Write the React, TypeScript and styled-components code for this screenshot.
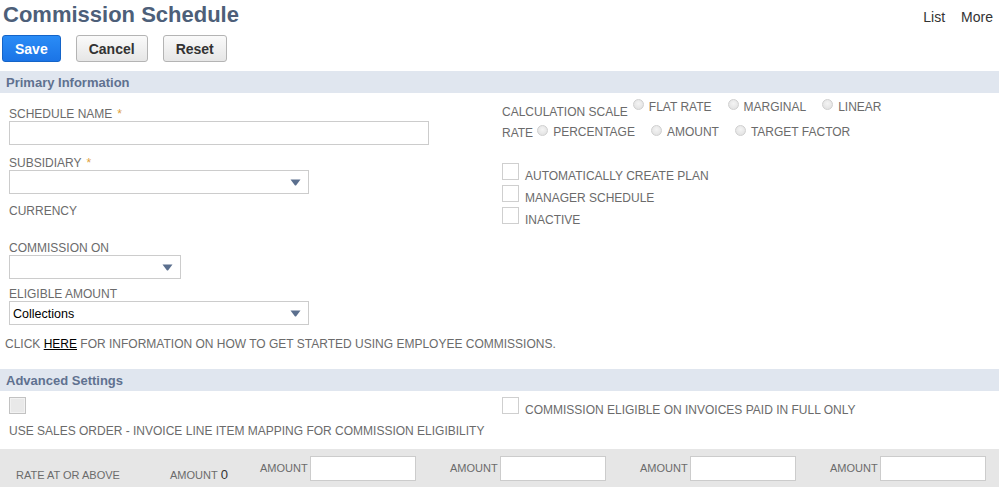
import React from 'react';
import styled, { createGlobalStyle } from 'styled-components';

const GlobalStyle = createGlobalStyle`
  html, body {
    margin: 0;
    padding: 0;
    background: #fff;
  }
  body {
    font-family: "Liberation Sans", Arial, Helvetica, sans-serif;
    color: #333;
  }
  * {
    box-sizing: border-box;
  }
`;

const Page = styled.div`
  width: 999px;
  height: 491px;
  overflow: hidden;
`;

const TopBar = styled.div`
  display: flex;
  justify-content: space-between;
  align-items: flex-start;
  height: 35px;
`;

const Title = styled.h1`
  margin: 0;
  padding: 2px 0 0 3px;
  font-size: 22px;
  line-height: 25px;
  font-weight: bold;
  color: #4d5f79;
`;

const Links = styled.div`
  display: flex;
  gap: 16px;
  padding: 9px 6px 0 0;
`;

const NavLink = styled.a`
  font-size: 14px;
  line-height: 16px;
  color: #333;
  text-decoration: none;
  cursor: pointer;
`;

const ButtonBar = styled.div`
  display: flex;
  gap: 15px;
  padding-left: 2px;
`;

const Button = styled.button<{ $primary?: boolean }>`
  height: 27px;
  padding: 0 12px;
  border-radius: 3px;
  font: bold 14px "Liberation Sans", Arial, sans-serif;
  border: 1px solid ${p => (p.$primary ? '#1464c8' : '#b4b4b4')};
  background: ${p => (p.$primary ? 'linear-gradient(#2a8cf6, #1b74e6)' : 'linear-gradient(#fafafa, #e6e6e6)')};
  color: ${p => (p.$primary ? '#fff' : '#333')};
  cursor: pointer;
`;

const SectionHeader = styled.div<{ $top: number }>`
  margin-top: ${p => p.$top}px;
  height: 22px;
  padding: 2px 0 0 6px;
  line-height: 20px;
  background: #e0e6ef;
  color: #5f7190;
  font-size: 13px;
  font-weight: bold;
`;

const Columns = styled.div`
  display: grid;
  grid-template-columns: 502px 1fr;
`;

const LeftCol = styled.div<{ $top: number }>`
  padding: ${p => p.$top}px 0 0 9px;
`;

const RightCol = styled.div`
  display: flex;
  flex-direction: column;
`;

const Field = styled.div<{ $after?: number }>`
  margin-bottom: ${p => p.$after ?? 0}px;
`;

const Label = styled.div`
  padding-top: 1px;
  font-size: 12px;
  line-height: 14px;
  color: #6b6b6b;
  text-transform: uppercase;
`;

const Star = styled.span`
  color: #e0a03c;
  margin-left: 5px;
`;

const TextBox = styled.input<{ $w: number }>`
  display: block;
  width: ${p => p.$w}px;
  height: 24px;
  border: 1px solid #cccccc;
  background: #fff;
  padding: 0 4px;
  outline: none;
`;

const SelectBox = styled.div<{ $w: number }>`
  display: flex;
  align-items: center;
  justify-content: space-between;
  width: ${p => p.$w}px;
  height: 24px;
  border: 1px solid #cccccc;
  background: #fff;
  padding: 1px 7px 0 3px;
`;

const SelectValue = styled.span`
  font-size: 12.5px;
  color: #000;
`;

const Spacer = styled.div<{ $h: number }>`
  height: ${p => p.$h}px;
`;

const RadioRow = styled.div<{ $top?: number }>`
  display: flex;
  align-items: flex-start;
  height: 25px;
  margin-top: ${p => p.$top ?? 0}px;
`;

const RowLabel = styled.span<{ $drop: number; $gap: number }>`
  font-size: 12px;
  line-height: 15px;
  color: #6b6b6b;
  margin-top: ${p => p.$drop}px;
  margin-right: ${p => p.$gap}px;
`;

const RadioOption = styled.label`
  display: flex;
  align-items: flex-start;
  margin-right: 16px;
`;

const RadioDot = styled.span<{ $drop: number }>`
  width: 11px;
  height: 11px;
  border-radius: 50%;
  border: 1px solid #d0d0d0;
  background: radial-gradient(circle at 50% 40%, #f4f4f4, #dedede);
  margin-top: ${p => p.$drop}px;
  margin-right: 5px;
  flex: none;
`;

const OptionText = styled.span<{ $drop: number }>`
  font-size: 12px;
  line-height: 15px;
  color: #6b6b6b;
  margin-top: ${p => p.$drop}px;
`;

const CheckList = styled.div<{ $top: number }>`
  display: flex;
  flex-direction: column;
  gap: 5px;
  margin-top: ${p => p.$top}px;
`;

const CheckRow = styled.label`
  display: flex;
  align-items: flex-start;
  height: 17px;
`;

const CheckBox = styled.span<{ $disabled?: boolean }>`
  width: 17px;
  height: 17px;
  flex: none;
  border: 1px solid ${p => (p.$disabled ? '#c2c2c2' : '#cfcfcf')};
  background: ${p => (p.$disabled ? '#e9e9e9' : '#fff')};
  box-shadow: ${p => (p.$disabled ? 'inset 0 0 0 1px #f2f2f2' : 'none')};
`;

const CheckText = styled.span`
  margin: 6px 0 0 6px;
  font-size: 12px;
  line-height: 15px;
  color: #6b6b6b;
  white-space: nowrap;
`;

const HelpText = styled.div`
  margin-top: 12px;
  padding-left: 5px;
  font-size: 12px;
  line-height: 15px;
  color: #6b6b6b;
`;

const HelpLink = styled.a`
  color: #000;
  text-decoration: underline;
  cursor: pointer;
`;

const AdvLeft = styled.div`
  padding: 6px 0 0 9px;
  display: flex;
  flex-direction: column;
  align-items: flex-start;
  gap: 10px;
`;

const AdvText = styled.span`
  font-size: 12px;
  line-height: 15px;
  color: #6b6b6b;
  white-space: nowrap;
`;

const RateBand = styled.div`
  margin-top: 10px;
  height: 38px;
  background: #e6e6e6;
  display: grid;
  grid-template-columns: 154px 90px repeat(4, 190px);
  padding-left: 16px;
  align-items: center;
`;

const BandText = styled.span`
  align-self: end;
  margin-bottom: 5px;
  font-size: 11px;
  line-height: 13px;
  color: #6b6b6b;
  white-space: nowrap;
`;

const BandValue = styled.span`
  font-size: 13px;
  color: #333;
  margin-left: 3px;
`;

const AmountCell = styled.div`
  display: flex;
  align-items: center;
  gap: 2px;
`;

const AmountLabel = styled.span`
  font-size: 11px;
  line-height: 13px;
  color: #6b6b6b;
  margin-top: 1px;
`;

const AmountBox = styled.input`
  width: 106px;
  height: 25px;
  border: 1px solid #cccccc;
  background: #fff;
  outline: none;
`;

const Arrow: React.FC = () => (
  <svg width="11" height="7" viewBox="0 0 11 7">
    <path d="M0.5 0.5 H10.5 L6.2 6.2 Q5.5 6.9 4.8 6.2 Z" fill="#5b6f8e" />
  </svg>
);

const Select: React.FC<{ width: number; value?: string }> = ({ width, value }) => (
  <SelectBox $w={width}>
    <SelectValue>{value}</SelectValue>
    <Arrow />
  </SelectBox>
);

const Radio: React.FC<{ text: string; dot: number; drop: number }> = ({ text, dot, drop }) => (
  <RadioOption>
    <RadioDot $drop={dot} />
    <OptionText $drop={drop}>{text}</OptionText>
  </RadioOption>
);

const Check: React.FC<{ text: string }> = ({ text }) => (
  <CheckRow>
    <CheckBox />
    <CheckText>{text}</CheckText>
  </CheckRow>
);

export default function App() {
  return (
    <Page>
      <GlobalStyle />
      <TopBar>
        <Title>Commission Schedule</Title>
        <Links>
          <NavLink>List</NavLink>
          <NavLink>More</NavLink>
        </Links>
      </TopBar>

      <ButtonBar>
        <Button $primary>Save</Button>
        <Button>Cancel</Button>
        <Button>Reset</Button>
      </ButtonBar>

      <SectionHeader $top={9}>Primary Information</SectionHeader>
      <Columns>
        <LeftCol $top={13}>
          <Field $after={10}>
            <Label>
              Schedule Name<Star>*</Star>
            </Label>
            <TextBox $w={420} />
          </Field>
          <Field $after={9}>
            <Label>
              Subsidiary<Star>*</Star>
            </Label>
            <Select width={300} />
          </Field>
          <Field $after={8}>
            <Label>Currency</Label>
            <Spacer $h={14} />
          </Field>
          <Field $after={7}>
            <Label>Commission On</Label>
            <Select width={172} />
          </Field>
          <Field>
            <Label>Eligible Amount</Label>
            <Select width={300} value="Collections" />
          </Field>
        </LeftCol>

        <RightCol>
          <RadioRow $top={6}>
            <RowLabel $drop={6} $gap={5}>CALCULATION SCALE</RowLabel>
            <Radio text="FLAT RATE" dot={0} drop={1} />
            <Radio text="MARGINAL" dot={0} drop={1} />
            <Radio text="LINEAR" dot={0} drop={1} />
          </RadioRow>
          <RadioRow>
            <RowLabel $drop={2} $gap={4}>RATE</RowLabel>
            <Radio text="PERCENTAGE" dot={1} drop={1} />
            <Radio text="AMOUNT" dot={1} drop={1} />
            <Radio text="TARGET FACTOR" dot={1} drop={1} />
          </RadioRow>
          <CheckList $top={14}>
            <Check text="AUTOMATICALLY CREATE PLAN" />
            <Check text="MANAGER SCHEDULE" />
            <Check text="INACTIVE" />
          </CheckList>
        </RightCol>
      </Columns>

      <HelpText>
        CLICK <HelpLink>HERE</HelpLink> FOR INFORMATION ON HOW TO GET STARTED USING EMPLOYEE COMMISSIONS.
      </HelpText>

      <SectionHeader $top={17}>Advanced Settings</SectionHeader>
      <Columns>
        <AdvLeft>
          <CheckBox $disabled />
          <AdvText>USE SALES ORDER - INVOICE LINE ITEM MAPPING FOR COMMISSION ELIGIBILITY</AdvText>
        </AdvLeft>
        <RightCol>
          <CheckList $top={6}>
            <Check text="COMMISSION ELIGIBLE ON INVOICES PAID IN FULL ONLY" />
          </CheckList>
        </RightCol>
      </Columns>

      <RateBand>
        <BandText>RATE AT OR ABOVE</BandText>
        <BandText>
          AMOUNT<BandValue>0</BandValue>
        </BandText>
        {[0, 1, 2, 3].map(i => (
          <AmountCell key={i}>
            <AmountLabel>AMOUNT</AmountLabel>
            <AmountBox />
          </AmountCell>
        ))}
      </RateBand>
    </Page>
  );
}
